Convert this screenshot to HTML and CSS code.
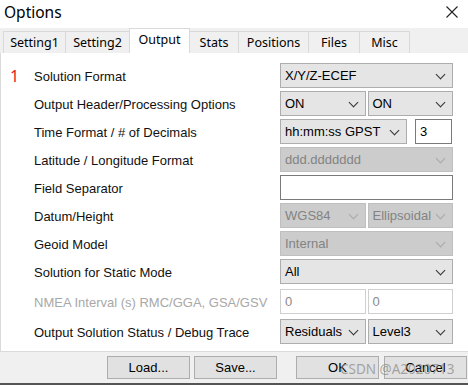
FILE: index.html
```html
<!DOCTYPE html>
<html>

<head>
  <title>Options</title>
  <link rel="stylesheet" href="styles.css">
</head>

<body>
  <div class="window">
    <div class="titlebar">
      <span class="title">Options</span>
      <svg class="close-x" width="12" height="12" viewBox="0 0 12 12">
        <path d="M0.5 0.5 L11.5 11.5 M11.5 0.5 L0.5 11.5" stroke="#222" stroke-width="1.1" fill="none" />
      </svg>
    </div>

    <div class="tabs">
      <div class="tab" style="width: 63px">Setting1</div>
      <div class="tab" style="width: 64px">Setting2</div>
      <div class="tab active" style="width: 61px">Output</div>
      <div class="tab" style="width: 49px">Stats</div>
      <div class="tab" style="width: 70px">Positions</div>
      <div class="tab" style="width: 51px">Files</div>
      <div class="tab" style="width: 50px">Misc</div>
    </div>

    <div class="panel">
      <span class="marker">1</span>

      <div class="row">
        <span class="label">Solution Format</span>
        <div class="select">X/Y/Z-ECEF<i class="chev"></i></div>
      </div>

      <div class="row">
        <span class="label">Output Header/Processing Options</span>
        <div class="pair">
          <div class="select">ON<i class="chev"></i></div>
          <div class="select">ON<i class="chev"></i></div>
        </div>
      </div>

      <div class="row">
        <span class="label">Time Format / # of Decimals</span>
        <div class="time-pair">
          <div class="select">hh:mm:ss GPST<i class="chev"></i></div>
          <div class="input">3</div>
        </div>
      </div>

      <div class="row">
        <span class="label">Latitude / Longitude Format</span>
        <div class="select disabled">ddd.ddddddd<i class="chev"></i></div>
      </div>

      <div class="row">
        <span class="label">Field Separator</span>
        <div class="input"></div>
      </div>

      <div class="row">
        <span class="label">Datum/Height</span>
        <div class="pair">
          <div class="select disabled">WGS84<i class="chev"></i></div>
          <div class="select disabled">Ellipsoidal<i class="chev"></i></div>
        </div>
      </div>

      <div class="row">
        <span class="label">Geoid Model</span>
        <div class="select disabled">Internal<i class="chev"></i></div>
      </div>

      <div class="row">
        <span class="label">Solution for Static Mode</span>
        <div class="select">All<i class="chev"></i></div>
      </div>

      <div class="row nmea">
        <span class="label muted">NMEA Interval (s) RMC/GGA, GSA/GSV</span>
        <div class="pair">
          <div class="input light">0</div>
          <div class="input light">0</div>
        </div>
      </div>

      <div class="row last">
        <span class="label">Output Solution Status / Debug Trace</span>
        <div class="pair">
          <div class="select">Residuals<i class="chev"></i></div>
          <div class="select">Level3<i class="chev"></i></div>
        </div>
      </div>
    </div>

    <div class="footer">
      <button class="btn load">Load...</button>
      <button class="btn save">Save...</button>
      <button class="btn ok">OK</button>
      <button class="btn cancel">Cancel</button>
      <span class="watermark">CSDN @A2020713</span>
    </div>
  </div>
</body>

</html>
```

FILE: styles.css
```css
body {
  margin: 0;
  background-color: #ffffff;
  font-family: "Liberation Sans", Arial, sans-serif;
  font-size: 13px;
  color: #000000;
}

.window {
  width: 468px;
  height: 386px;
  display: flex;
  flex-direction: column;
  overflow: hidden;
}

.titlebar {
  height: 28px;
  display: flex;
  align-items: center;
  justify-content: space-between;
  padding: 0 10px 4px 4px;
  box-sizing: border-box;
}

.title {
  font-family: "Noto Sans", sans-serif;
  font-size: 15.5px;
  color: #000000;
}

.tabs {
  height: 25px;
  background-color: #f0f0f0;
  display: flex;
  align-items: flex-end;
  padding-left: 3px;
  box-sizing: border-box;
}

.tab {
  height: 22px;
  box-sizing: border-box;
  border: 1px solid #d9d9d9;
  border-bottom: none;
  border-left: none;
  display: flex;
  align-items: center;
  justify-content: center;
  font-family: "Noto Sans", sans-serif;
  font-size: 12.5px;
  color: #000000;
}

.tab:first-child {
  border-left: 1px solid #d9d9d9;
}

.tab.active {
  height: 25px;
  background-color: #ffffff;
  border-left: 1px solid #d9d9d9;
  margin-left: -1px;
  padding-bottom: 4px;
}

.panel {
  position: relative;
  height: 299px;
  box-sizing: border-box;
  padding: 10px 15px 0 33px;
  border-left: 1px solid #dadada;
  border-bottom: 1px solid #dadada;
  display: flex;
  flex-direction: column;
  gap: 3px;
}

.marker {
  position: absolute;
  left: 9px;
  top: 12px;
  font-family: "Noto Sans", sans-serif;
  font-size: 16px;
  color: #e8201c;
}

.row {
  height: 25px;
  display: grid;
  grid-template-columns: 1fr 173px;
  align-items: center;
}

.row.nmea {
  margin-top: 2px;
}

.row.last {
  margin-top: 2px;
}

.label {
  white-space: nowrap;
  padding-top: 2px;
  color: #111111;
}

.label.muted {
  color: #a8a8a8;
}

.select,
.input {
  position: relative;
  height: 25px;
  box-sizing: border-box;
  display: flex;
  align-items: center;
  padding-left: 4px;
  white-space: nowrap;
  overflow: hidden;
}

.select {
  background-color: #e5e5e5;
  border: 1px solid #adadad;
}

.select.disabled {
  background-color: #cccccc;
  border-color: #bfbfbf;
  color: #838383;
}

.input {
  background-color: #ffffff;
  border: 1px solid #7a7a7a;
}

.input.light {
  border-color: #d0d0d0;
  color: #8a8a8a;
}

.chev {
  position: absolute;
  right: 8px;
  top: 7px;
  width: 6px;
  height: 6px;
  border-right: 1px solid #333333;
  border-bottom: 1px solid #333333;
  transform: rotate(45deg);
}

.disabled .chev {
  border-color: #a8a8a8;
}

.pair {
  display: grid;
  grid-template-columns: 1fr 1fr;
  gap: 2px;
}

.time-pair {
  display: grid;
  grid-template-columns: 127px 37px;
  gap: 8px;
}

.footer {
  position: relative;
  height: 33px;
  background-color: #f0f0f0;
  border-bottom: 2px solid #555555;
  box-sizing: border-box;
  display: flex;
  align-items: flex-start;
  padding: 4px 0 0 107px;
}

.btn {
  height: 23px;
  width: 83px;
  padding: 0;
  background-color: #e1e1e1;
  border: 1px solid #adadad;
  font-family: "Liberation Sans", Arial, sans-serif;
  font-size: 13px;
  color: #000000;
}

.btn.save {
  margin-left: 4px;
}

.btn.ok {
  margin-left: 19px;
}

.btn.cancel {
  margin-left: 5px;
}

.watermark {
  position: absolute;
  left: 340px;
  top: 8px;
  font-family: "Noto Sans", sans-serif;
  font-size: 13.5px;
  color: rgba(140, 140, 140, 0.75);
  pointer-events: none;
}
```
